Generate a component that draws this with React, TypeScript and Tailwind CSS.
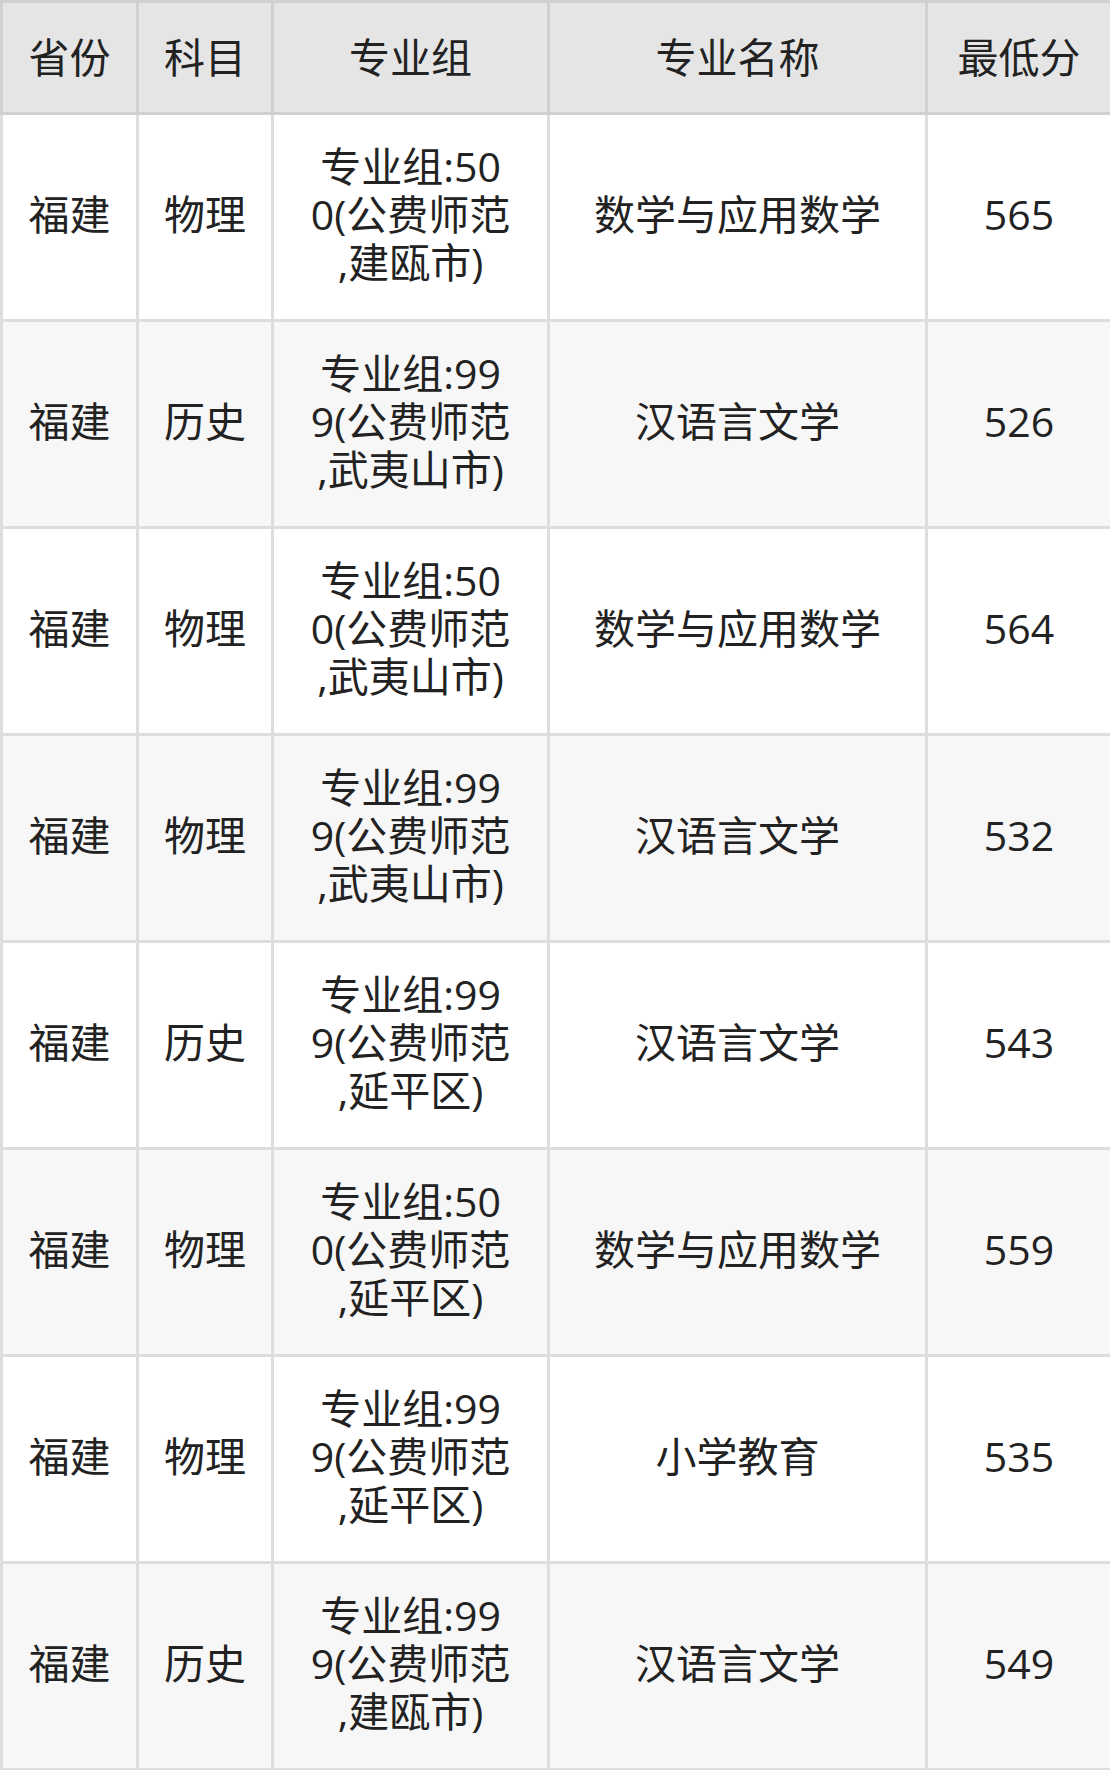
const rows = [
  { prov: "福建", subj: "物理", group: ["专业组:50", "0(公费师范", ",建瓯市)"], major: "数学与应用数学", score: 565 },
  { prov: "福建", subj: "历史", group: ["专业组:99", "9(公费师范", ",武夷山市)"], major: "汉语言文学", score: 526 },
  { prov: "福建", subj: "物理", group: ["专业组:50", "0(公费师范", ",武夷山市)"], major: "数学与应用数学", score: 564 },
  { prov: "福建", subj: "物理", group: ["专业组:99", "9(公费师范", ",武夷山市)"], major: "汉语言文学", score: 532 },
  { prov: "福建", subj: "历史", group: ["专业组:99", "9(公费师范", ",延平区)"], major: "汉语言文学", score: 543 },
  { prov: "福建", subj: "物理", group: ["专业组:50", "0(公费师范", ",延平区)"], major: "数学与应用数学", score: 559 },
  { prov: "福建", subj: "物理", group: ["专业组:99", "9(公费师范", ",延平区)"], major: "小学教育", score: 535 },
  { prov: "福建", subj: "历史", group: ["专业组:99", "9(公费师范", ",建瓯市)"], major: "汉语言文学", score: 549 },
];

const headers = ["省份", "科目", "专业组", "专业名称", "最低分"];

const cell = "border-[3px] border-[#dddddd] pb-[6px] text-center";

export default function App() {
  return (
    <div
      className="w-[1110px] bg-white text-[#222]"
      style={{ fontFamily: '"Open Sans", "Noto Sans CJK SC", sans-serif' }}
    >
      <table className="w-full table-fixed border-collapse text-[41px] leading-[48px]">
        <colgroup>
          <col className="w-[136px]" />
          <col className="w-[135px]" />
          <col className="w-[276px]" />
          <col className="w-[378px]" />
          <col className="w-[185px]" />
        </colgroup>
        <thead>
          <tr className="h-[112px] bg-[#e5e5e5]">
            {headers.map((h) => (
              <th key={h} className="border-[3px] border-[#d0d0d0] pb-[2px] text-center font-normal">
                {h}
              </th>
            ))}
          </tr>
        </thead>
        <tbody>
          {rows.map((r, i) => (
            <tr key={i} className={i % 2 === 1 ? "h-[207px] bg-[#f7f7f7]" : "h-[207px] bg-white"}>
              <td className={cell}>{r.prov}</td>
              <td className={cell}>{r.subj}</td>
              <td className={cell}>
                {r.group.map((line, j) => (
                  <div key={j} className="whitespace-nowrap">
                    {line}
                  </div>
                ))}
              </td>
              <td className={cell}>{r.major}</td>
              <td className={cell}>{r.score}</td>
            </tr>
          ))}
        </tbody>
      </table>
    </div>
  );
}
